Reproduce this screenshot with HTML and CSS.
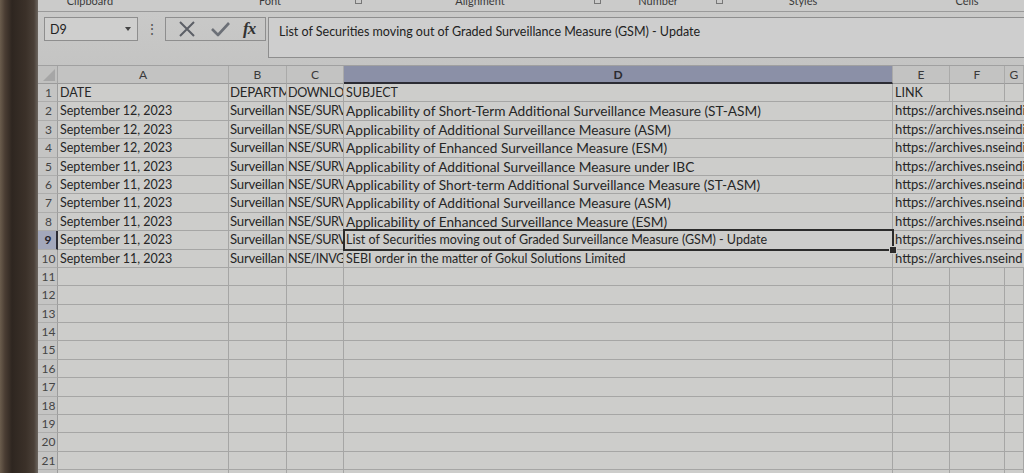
FILE: index.html
```html
<!DOCTYPE html>
<html>
<head>
<meta charset="utf-8">
<link rel="stylesheet" href="styles.css">
</head>
<body>
<div class="frame">
  <div class="bezel"></div>
  <div class="screen">
    <div class="ribbon">
      <span class="grp g-clip">Clipboard</span>
      <span class="grp g-font">Font</span>
      <span class="launch l1"></span>
      <span class="grp g-align">Alignment</span>
      <span class="launch l2"></span>
      <span class="grp g-num">Number</span>
      <span class="launch l3"></span>
      <span class="grp g-sty">Styles</span>
      <span class="grp g-cells">Cells</span>
    </div>
    <div class="fbar">
      <div class="namebox"><span>D9</span><span class="dd"></span></div>
      <div class="dots">⋮</div>
      <div class="fbtns">
        <svg class="ico" width="22" height="18" viewBox="0 0 22 18"><path d="M4 2 L18 16 M18 2 L4 16" stroke="#5c5f66" stroke-width="2" fill="none"/></svg>
        <svg class="ico" width="22" height="18" viewBox="0 0 22 18"><path d="M3 9 L9 15 L20 3" stroke="#6c7077" stroke-width="2.6" fill="none" stroke-linejoin="round"/></svg>
        <span class="fx">fx</span>
      </div>
      <div class="finput">List of Securities moving out of Graded Surveillance Measure (GSM) - Update</div>
    </div>
    <div class="sheet">
      <div class="corner"><span class="tri"></span></div>
      <div class="ch">A</div><div class="ch">B</div><div class="ch">C</div><div class="ch chsel">D</div><div class="ch">E</div><div class="ch">F</div><div class="ch">G</div>

      <div class="rh">1</div><div class="c">DATE</div><div class="c m">DEPARTM</div><div class="c m n">DOWNLO/</div><div class="c">SUBJECT</div><div class="c">LINK</div><div class="c"></div><div class="c"></div>
      <div class="rh">2</div><div class="c">September 12, 2023</div><div class="c m">Surveillan</div><div class="c m n">NSE/SURV</div><div class="c big">Applicability of Short-Term Additional Surveillance Measure (ST-ASM)</div><div class="c link">https://archives.nseindia</div>
      <div class="rh">3</div><div class="c">September 12, 2023</div><div class="c m">Surveillan</div><div class="c m n">NSE/SURV</div><div class="c big">Applicability of Additional Surveillance Measure (ASM)</div><div class="c link">https://archives.nseindia</div>
      <div class="rh">4</div><div class="c">September 12, 2023</div><div class="c m">Surveillan</div><div class="c m n">NSE/SURV</div><div class="c big">Applicability of Enhanced Surveillance Measure (ESM)</div><div class="c link">https://archives.nseindia</div>
      <div class="rh">5</div><div class="c">September 11, 2023</div><div class="c m">Surveillan</div><div class="c m n">NSE/SURV</div><div class="c big">Applicability of Additional Surveillance Measure under IBC</div><div class="c link">https://archives.nseindi</div>
      <div class="rh">6</div><div class="c">September 11, 2023</div><div class="c m">Surveillan</div><div class="c m n">NSE/SURV</div><div class="c big">Applicability of Short-term Additional Surveillance Measure (ST-ASM)</div><div class="c link">https://archives.nseindi</div>
      <div class="rh">7</div><div class="c">September 11, 2023</div><div class="c m">Surveillan</div><div class="c m n">NSE/SURV</div><div class="c big">Applicability of Additional Surveillance Measure (ASM)</div><div class="c link">https://archives.nseindi</div>
      <div class="rh">8</div><div class="c">September 11, 2023</div><div class="c m">Surveillan</div><div class="c m n">NSE/SURV</div><div class="c big">Applicability of Enhanced Surveillance Measure (ESM)</div><div class="c link">https://archives.nseindi</div>
      <div class="rh rhsel">9</div><div class="c">September 11, 2023</div><div class="c m">Surveillan</div><div class="c m n">NSE/SURV</div><div class="c sel">List of Securities moving out of Graded Surveillance Measure (GSM) - Update</div><div class="c link">https://archives.nseind</div>
      <div class="rh">10</div><div class="c">September 11, 2023</div><div class="c m">Surveillan</div><div class="c m n">NSE/INVG</div><div class="c">SEBI order in the matter of Gokul Solutions Limited</div><div class="c link">https://archives.nseind</div>

      <div class="rh">11</div><div class="c"></div><div class="c"></div><div class="c"></div><div class="c"></div><div class="c"></div><div class="c"></div><div class="c"></div>
      <div class="rh">12</div><div class="c"></div><div class="c"></div><div class="c"></div><div class="c"></div><div class="c"></div><div class="c"></div><div class="c"></div>
      <div class="rh">13</div><div class="c"></div><div class="c"></div><div class="c"></div><div class="c"></div><div class="c"></div><div class="c"></div><div class="c"></div>
      <div class="rh">14</div><div class="c"></div><div class="c"></div><div class="c"></div><div class="c"></div><div class="c"></div><div class="c"></div><div class="c"></div>
      <div class="rh">15</div><div class="c"></div><div class="c"></div><div class="c"></div><div class="c"></div><div class="c"></div><div class="c"></div><div class="c"></div>
      <div class="rh">16</div><div class="c"></div><div class="c"></div><div class="c"></div><div class="c"></div><div class="c"></div><div class="c"></div><div class="c"></div>
      <div class="rh">17</div><div class="c"></div><div class="c"></div><div class="c"></div><div class="c"></div><div class="c"></div><div class="c"></div><div class="c"></div>
      <div class="rh">18</div><div class="c"></div><div class="c"></div><div class="c"></div><div class="c"></div><div class="c"></div><div class="c"></div><div class="c"></div>
      <div class="rh">19</div><div class="c"></div><div class="c"></div><div class="c"></div><div class="c"></div><div class="c"></div><div class="c"></div><div class="c"></div>
      <div class="rh">20</div><div class="c"></div><div class="c"></div><div class="c"></div><div class="c"></div><div class="c"></div><div class="c"></div><div class="c"></div>
      <div class="rh">21</div><div class="c"></div><div class="c"></div><div class="c"></div><div class="c"></div><div class="c"></div><div class="c"></div><div class="c"></div>
      <div class="rh">22</div><div class="c"></div><div class="c"></div><div class="c"></div><div class="c"></div><div class="c"></div><div class="c"></div><div class="c"></div>
    </div>
  </div>
</div>
</body>
</html>
```
FILE: styles.css
```css
* { box-sizing: border-box; }
html, body { margin: 0; padding: 0; }
body {
  width: 1024px;
  height: 473px;
  overflow: hidden;
  background: #3a3029;
  font-family: Lato, "Liberation Sans", sans-serif;
  color: #2a2a2a;
}
.frame {
  display: flex;
  width: 1024px;
  height: 473px;
}
.bezel {
  width: 38px;
  flex: none;
  background: linear-gradient(90deg, #6b5d4d 0px, #4a3d33 5px, #2e2620 12px, #3b3129 26px, #4a4038 34px, #6c6660 38px);
}
.screen {
  flex: 1;
  display: flex;
  flex-direction: column;
  background: #c8c8c7;
  overflow: hidden;
}
.ribbon {
  height: 12px;
  flex: none;
  position: relative;
  background: #cbcbca;
  border-bottom: 1px solid #9a9a9a;
  overflow: hidden;
  font-size: 11px;
  color: #3a3a3a;
}
.grp {
  position: absolute;
  top: -6px;
  line-height: 14px;
  transform: translateX(-50%);
}
.g-clip { left: 52px; }
.g-font { left: 232px; }
.g-align { left: 442px; }
.g-num { left: 620px; }
.g-sty { left: 765px; }
.g-cells { left: 929px; }
.launch {
  position: absolute;
  top: -3px;
  width: 7px;
  height: 7px;
  border: 1px solid #777;
}
.l1 { left: 317px; }
.l2 { left: 556px; }
.l3 { left: 678px; }
.fbar {
  height: 54px;
  flex: none;
  display: flex;
  align-items: flex-start;
  padding: 5px 0 0 6px;
  background: linear-gradient(180deg, #c9c9c8, #c4c4c3);
  border-bottom: 1px solid #a0a0a0;
}
.namebox {
  width: 94px;
  height: 24px;
  border: 1px solid #8e8e8e;
  background: #cfcfce;
  display: flex;
  align-items: center;
  justify-content: space-between;
  padding: 0 6px 0 5px;
  font-size: 12.5px;
  color: #222;
}
.dd {
  width: 0;
  height: 0;
  border-left: 3px solid transparent;
  border-right: 3px solid transparent;
  border-top: 4px solid #444;
}
.dots {
  width: 27px;
  text-align: center;
  font-size: 14px;
  line-height: 24px;
  color: #555;
}
.fbtns {
  width: 101px;
  height: 24px;
  border: 1px solid #8e8e8e;
  display: flex;
  align-items: center;
  justify-content: space-around;
  padding: 0 4px;
}
.fx {
  font-family: "Liberation Serif", "DejaVu Serif", serif;
  font-style: italic;
  font-weight: bold;
  font-size: 17px;
  color: #333;
  letter-spacing: -1px;
}
.finput {
  flex: 1;
  height: 41px;
  margin-left: 2px;
  border: 1px solid #8e8e8e;
  border-right: none;
  background: #cecece;
  padding: 6px 0 0 10px;
  font-size: 12.5px;
  color: #222;
}
.sheet {
  display: grid;
  grid-template-columns: 20px 171px 58px 57px 549px 57px 55px 1fr;
  grid-template-rows: 18px;
  grid-auto-rows: 18.4px;
  font-size: 12.5px;
}
.corner {
  background: #c0c0bf;
  border-right: 1px solid #a4a4a4;
  border-bottom: 1px solid #9a9a9a;
  position: relative;
}
.tri {
  position: absolute;
  right: 2px;
  bottom: 2px;
  width: 0;
  height: 0;
  border-left: 12px solid transparent;
  border-bottom: 12px solid #a6a6a6;
}
.ch {
  background: #c3c3c2;
  border-right: 1px solid #aaaaa9;
  border-bottom: 1px solid #9a9a9a;
  text-align: center;
  font-size: 12px;
  line-height: 17px;
  color: #3a3a3a;
}
.chsel {
  background: #8b90a7;
  border-bottom: 2px solid #2c2c34;
  font-weight: bold;
  color: #2a2a30;
}
.rh {
  background: #c4c4c3;
  border-right: 1px solid #9c9c9c;
  border-bottom: 1px solid #adadac;
  text-align: center;
  font-size: 12px;
  line-height: 18px;
  color: #454545;
  padding-left: 2px;
}
.rhsel {
  background: #a3a8bb;
  border-right: 2px solid #2c2c34;
  font-weight: bold;
  color: #23232a;
}
.c {
  background: #cdcdcb;
  border-right: 1px solid #a6a6a5;
  border-bottom: 1px solid #a6a6a5;
  padding: 0 2px;
  line-height: 17.4px;
  white-space: nowrap;
  overflow: hidden;
  color: #262626;
}
.m {
  font-size: 13.2px;
  padding: 0 1px;
  letter-spacing: -0.2px;
}
.n {
  font-size: 12.6px;
  letter-spacing: -0.4px;
}
.big {
  font-size: 13.7px;
}
.link {
  grid-column: span 3;
  border-right: none;
  font-size: 13px;
}
.sel {
  position: relative;
  overflow: visible;
}
.sel::after {
  content: "";
  position: absolute;
  left: -1px;
  top: -2px;
  right: -2px;
  bottom: -2px;
  border: 2px solid #2b2b2b;
}
.sel::before {
  content: "";
  position: absolute;
  right: -5px;
  bottom: -5px;
  width: 6px;
  height: 6px;
  background: #2b2b2b;
  border: 1px solid #cdcdcb;
  z-index: 2;
}
```
